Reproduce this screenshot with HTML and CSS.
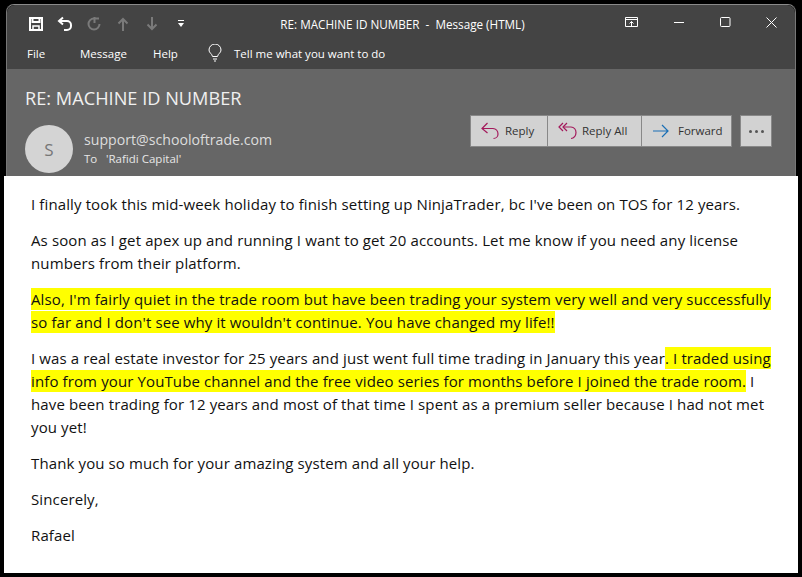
FILE: index.html
```html
<!DOCTYPE html>
<html lang="en">
<head>
    <meta charset="UTF-8">
    <meta name="viewport" content="width=device-width, initial-scale=1.0">
    <link rel="stylesheet" href="styles.css">
    <title>RE: MACHINE ID NUMBER - Message (HTML)</title>
</head>
<body>
    <div class="window">
        <div class="chrome">
            <div class="titlebar">
                <div class="quick">
                    <svg class="qicon" width="16" height="16" viewBox="0 0 16 16" fill="none" stroke="#fff" stroke-width="2"><path d="M2 2h12v12H2z"/><path d="M4.500 2v4h7V2"/><path d="M5 14V10h6v4" stroke-width="1.500"/></svg>
                    <svg class="qicon" width="16" height="16" viewBox="0 0 16 16" fill="none" stroke="#fff" stroke-width="2"><path d="M6 1.500 2 5l4 3.500"/><path d="M2.500 5H10a4 4 0 0 1 4 4v1a4 4 0 0 1-4 4H7"/></svg>
                    <svg class="qicon" width="16" height="16" viewBox="0 0 16 16" fill="none" stroke="#7a7a7a" stroke-width="2"><path d="M8 2.500a5.500 5.500 0 1 0 5.500 5.500"/><path d="M8.500 1v6M8 2.500h5"/></svg>
                    <svg class="qicon" width="16" height="16" viewBox="0 0 16 16" fill="none" stroke="#7a7a7a" stroke-width="2"><path d="M8 15V3M3.500 7.500 8 3l4.500 4.500"/></svg>
                    <svg class="qicon" width="16" height="16" viewBox="0 0 16 16" fill="none" stroke="#7a7a7a" stroke-width="2"><path d="M8 1v12M3.500 8.500 8 13l4.500-4.500"/></svg>
                    <svg class="qicon qicon-more" width="6" height="16" viewBox="0 0 6 16" fill="none" stroke="#fff"><path d="M0 4.500h6"/><path d="M0 7h6l-3 4z" fill="#fff" stroke="none"/></svg>
                </div>
                <div class="wintitle">RE: MACHINE ID NUMBER&nbsp; -&nbsp; Message (HTML)</div>
                <div class="controls">
                    <svg width="14" height="11" viewBox="0 0 14 11" fill="none" stroke="#fff"><path d="M.5 .5h12v9H.5zM.5 2.500h12"/><path d="M6.500 9V4.500M4.500 6.500l2-2 2 2"/></svg>
                    <svg width="11" height="11" viewBox="0 0 11 11" fill="none" stroke="#fff"><path d="M0 5.500h10"/></svg>
                    <svg width="11" height="11" viewBox="0 0 11 11" fill="none" stroke="#fff"><rect x=".5" y=".5" width="9.500" height="9" rx="1"/></svg>
                    <svg width="11" height="11" viewBox="0 0 11 11" fill="none" stroke="#fff"><path d="M.5 .5l10 10M10.500 .5l-10 10"/></svg>
                </div>
            </div>
            <div class="ribbon">
                <span class="tab tab-file">File</span>
                <span class="tab tab-message">Message</span>
                <span class="tab tab-help">Help</span>
                <svg class="bulb" width="14" height="18" viewBox="0 0 14 18" fill="none" stroke="#fff"><path d="M4.500 12.500C4 9.500 1 9 1 6a6 6 0 0 1 12 0c0 3-3 3.500-3.500 6.500z"/><path d="M5 15h4M6 17h2"/></svg>
                <span class="tab">Tell me what you want to do</span>
            </div>
        </div>

        <div class="header">
            <div class="header-left">
                <h1 class="subject">RE: MACHINE ID NUMBER</h1>
                <div class="sender">
                    <div class="avatar">S</div>
                    <div>
                        <div class="from">support@schooloftrade.com</div>
                        <div class="to"><span class="to-label">To</span>'Rafidi Capital'</div>
                    </div>
                </div>
            </div>
            <div class="actions">
                <div class="btn-group">
                    <div class="btn btn-reply">
                        <svg width="20" height="18" viewBox="0 0 20 18" fill="none" stroke="#a3195b" stroke-width="1.200"><path d="M6.500 1 1 6.500 6.500 11"/><path d="M1 6.500h11a5.500 5.500 0 0 1 5 5.500c0 2.500-2 4.500-4.500 4.500"/></svg>
                        Reply
                    </div>
                    <div class="btn btn-replyall">
                        <svg width="20" height="18" viewBox="0 0 20 18" fill="none" stroke="#a3195b" stroke-width="1.200"><path d="M5 1 1 5l4 4"/><path d="M9 1 5 5l4 4"/><path d="M5 5h8a5.500 5.500 0 0 1 5 5.500c0 3-2 6-5 6"/></svg>
                        Reply All
                    </div>
                    <div class="btn btn-forward">
                        <svg width="16" height="14" viewBox="0 0 16 14" fill="none" stroke="#1a6fb5" stroke-width="1.200"><path d="M0 7h15M9 1l6 6-6 6"/></svg>
                        Forward
                    </div>
                </div>
                <div class="btn-more"><span class="dot"></span><span class="dot"></span><span class="dot"></span></div>
            </div>
        </div>

        <div class="message">
            <p>I finally took this mid-week holiday to finish setting up NinjaTrader, bc I've been on TOS for 12 years.</p>
            <p>As soon as I get apex up and running I want to get 20 accounts. Let me know if you need any license<br>numbers from their platform.</p>
            <p><span class="hl">Also, I'm fairly quiet in the trade room but have been trading your system very well and very successfully<br>so far and I don't see why it wouldn't continue. You have changed my life!!</span></p>
            <p>I was a real estate investor for 25 years and just went full time trading in January this year<span class="hl">. I traded using<br>info from your YouTube channel and the free video series for months before I joined the trade room.</span> I<br>have been trading for 12 years and most of that time I spent as a premium seller because I had not met<br>you yet!</p>
            <p>Thank you so much for your amazing system and all your help.</p>
            <p>Sincerely,</p>
            <p>Rafael</p>
        </div>
    </div>
</body>
</html>
```

FILE: styles.css
```css
body {
    margin: 0;
    height: 577px;
    overflow: hidden;
    background-color: #000;
    font-family: 'Open Sans', 'Noto Sans', sans-serif;
}

.window {
    width: 790px;
    margin: 4px 0 0 6px;
    box-sizing: border-box;
    border-top: 1px solid #8a8a8a;
    border-left: 1px solid #777;
    border-right: 1px solid #777;
    border-radius: 8px 8px 0 0;
}

.chrome {
    height: 64px;
    background-color: #444;
    color: #fff;
    border-radius: 8px 8px 0 0;
}

.titlebar {
    display: grid;
    grid-template-columns: 1fr auto 1fr;
    align-items: center;
    height: 38px;
    padding: 0 18px 0 21px;
}

.quick {
    display: flex;
    align-items: center;
    gap: 13px;
}

.qicon-more {
    margin-left: 5px;
}

.wintitle {
    font-size: 11.700px;
}

.controls {
    display: flex;
    justify-content: flex-end;
    align-items: center;
    gap: 35px;
    margin-top: -4px;
}

.ribbon {
    display: flex;
    align-items: center;
    height: 20px;
    padding-left: 20px;
    font-size: 11.500px;
}

.tab-file {
    width: 53px;
}

.tab-message {
    width: 73px;
}

.tab-help {
    width: 55px;
}

.bulb {
    margin-right: 12px;
}

.header {
    display: flex;
    justify-content: space-between;
    height: 107px;
    padding: 0 23px 0 18px;
    background-color: #666;
    color: #fff;
}

.subject {
    margin: 16px 0 0;
    font-size: 18.200px;
    line-height: 26px;
    font-weight: 400;
    color: #f0f0f0;
}

.sender {
    display: flex;
    align-items: flex-start;
    gap: 11px;
    margin-top: 14px;
}

.avatar {
    display: flex;
    align-items: center;
    justify-content: center;
    width: 48px;
    height: 48px;
    border-radius: 50%;
    background-color: #d4d4d4;
    color: #777;
    font-size: 17px;
}

.from {
    margin-top: 4px;
    font-size: 14.150px;
    line-height: 22px;
    color: #ddd;
}

.to {
    font-size: 11.500px;
    line-height: 16px;
    color: #e6e6e6;
}

.to-label {
    display: inline-block;
    width: 22px;
}

.actions {
    display: flex;
    gap: 8px;
    margin-top: 46px;
    height: 32px;
}

.btn-group {
    display: flex;
}

.btn,
.btn-more {
    display: flex;
    align-items: center;
    box-sizing: border-box;
    height: 32px;
    background-color: #d2d2d2;
    border: 1px solid #888;
    color: #333;
    font-size: 11.500px;
}

.btn {
    gap: 4px;
    padding: 0 0 1px 10px;
}

.btn + .btn {
    border-left: none;
}

.btn-reply {
    width: 78px;
}

.btn-replyall {
    width: 94px;
}

.btn-forward {
    width: 90px;
    padding-left: 11px;
}

.btn-forward svg {
    margin-right: 5px;
}

.btn-more {
    justify-content: center;
    gap: 3px;
    width: 32px;
}

.dot {
    width: 3px;
    height: 3px;
    border-radius: 50%;
    background-color: #555;
}

.message {
    box-sizing: border-box;
    height: 397px;
    margin: 0 -3px;
    padding: 17px 0 0 27px;
    background-color: #fff;
    color: #111;
    font-size: 15px;
    letter-spacing: .12px;
    line-height: 23px;
    white-space: nowrap;
}

.message p {
    margin: 0 0 13px;
}

.hl {
    padding: 1px 0;
    background-color: #ffff00;
}
```
